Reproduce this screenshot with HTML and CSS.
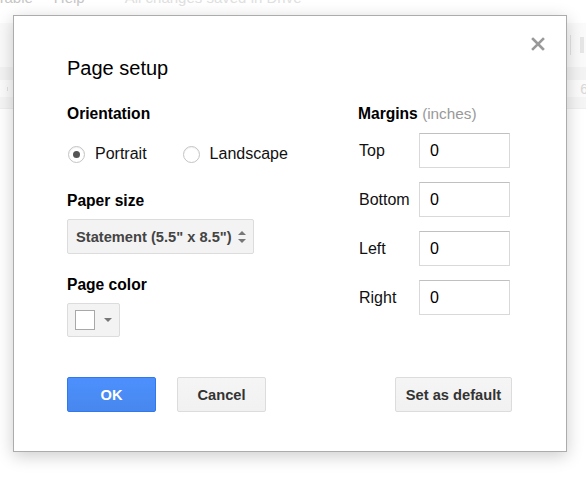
FILE: index.html
```html
<!DOCTYPE html>
<html>
<head>
<meta charset="utf-8">
<title>Page setup</title>
<link rel="stylesheet" href="styles.css">
</head>
<body>
<div class="page">
  <div class="menubar">
    <span class="menu menu-first">Table</span>
    <span class="menu">Help</span>
    <span class="status">All changes saved in Drive</span>
  </div>
  <div class="toolbar">
    <span class="tb-sep"></span>
    <span class="tb-icon"></span>
  </div>
  <div class="band"></div>
  <div class="ruler">
    <span class="tick"></span>
    <span class="ruler-num">6</span>
  </div>
  <div class="band band-low"></div>
</div>

<div class="dialog">
  <button class="close" aria-label="Close">
    <svg width="14" height="14" viewBox="0 0 14 14"><path d="M2 2 L12 12 M12 2 L2 12" stroke="#999" stroke-width="2.6" stroke-linecap="square" fill="none"/></svg>
  </button>
  <h1 class="title">Page setup</h1>
  <div class="body">
    <div class="col-left">
      <div class="label">Orientation</div>
      <div class="radios">
        <label class="radio"><span class="radio-circle checked"></span>Portrait</label>
        <label class="radio"><span class="radio-circle"></span>Landscape</label>
      </div>
      <div class="label label-gap">Paper size</div>
      <div class="select">
        <span>Statement (5.5" x 8.5")</span>
        <span class="updown"><span class="tri-up"></span><span class="tri-down"></span></span>
      </div>
      <div class="label label-gap2">Page color</div>
      <div class="color-btn">
        <span class="swatch"></span>
        <span class="caret"></span>
      </div>
    </div>
    <div class="col-right">
      <div class="label">Margins <span class="hint">(inches)</span></div>
      <div class="margin-rows">
        <div class="mrow"><span class="mlabel">Top</span><div class="minput">0</div></div>
        <div class="mrow"><span class="mlabel">Bottom</span><div class="minput">0</div></div>
        <div class="mrow"><span class="mlabel">Left</span><div class="minput">0</div></div>
        <div class="mrow"><span class="mlabel">Right</span><div class="minput">0</div></div>
      </div>
    </div>
  </div>
  <div class="footer">
    <div class="btn-group">
      <button class="btn btn-ok">OK</button>
      <button class="btn">Cancel</button>
    </div>
    <button class="btn btn-default">Set as default</button>
  </div>
</div>
</body>
</html>
```
FILE: styles.css
```css
html, body {
  margin: 0;
  padding: 0;
}
body {
  width: 586px;
  height: 484px;
  overflow: hidden;
  background: #fff;
  font-family: "Liberation Sans", Arial, sans-serif;
  position: relative;
}

/* faded document behind the dialog */
.page {
  display: flex;
  flex-direction: column;
}
.menubar {
  height: 23px;
  display: flex;
  align-items: flex-start;
  font-size: 15px;
  line-height: 16px;
  white-space: nowrap;
}
.menubar span {
  margin-top: -10px;
}
.menu {
  color: #c6c6c6;
  margin-right: 21px;
}
.menu-first {
  margin-left: -3px;
}
.status {
  color: #e0e0e0;
  margin-left: 19px;
}
.toolbar {
  height: 44px;
  background: #fafafa;
  display: flex;
  justify-content: flex-end;
  align-items: center;
}
.tb-sep {
  width: 1px;
  height: 20px;
  background: #e3e3e3;
  margin-right: 9px;
}
.tb-icon {
  width: 6px;
  height: 16px;
  border-left: 4px solid #e6e6e6;
  box-sizing: border-box;
}
.band {
  height: 13px;
  background: #f3f3f3;
}
.band-low {
  height: 11px;
  background: #f5f5f5;
  border-bottom: 1px solid #efefef;
}
.ruler {
  height: 17px;
  background: #fbfbfb;
  display: flex;
  align-items: center;
  justify-content: space-between;
}
.tick {
  width: 1px;
  height: 4px;
  background: #e3e3e3;
  margin-left: 7px;
}
.ruler-num {
  color: #d8d8d8;
  font-size: 14px;
  margin-right: -2px;
}

/* dialog */
.dialog {
  position: absolute;
  left: 13px;
  top: 15px;
  width: 554px;
  box-sizing: border-box;
  background: #fff;
  border: 1px solid #acacac;
  box-shadow: 0 4px 16px rgba(0, 0, 0, 0.2);
  padding: 40px 54px 39px 53px;
  color: #000;
}
.close {
  position: absolute;
  right: 21px;
  top: 21px;
  width: 14px;
  height: 14px;
  padding: 0;
  border: 0;
  background: none;
  display: block;
}
.close svg {
  display: block;
}
.title {
  margin: 0;
  font-size: 20px;
  line-height: 24px;
  font-weight: normal;
  color: #000;
}
.body {
  margin-top: 25px;
  display: grid;
  grid-template-columns: 291px 1fr;
}
.col-left, .col-right {
  display: flex;
  flex-direction: column;
  align-items: flex-start;
}
.label {
  font-size: 15.6px;
  line-height: 18px;
  font-weight: bold;
  color: #000;
}
.hint {
  font-weight: normal;
  color: #999;
  font-size: 15.3px;
}
.label-gap {
  margin-top: 28px;
}
.label-gap2 {
  margin-top: 22px;
}
.radios {
  margin-top: 21px;
  height: 20px;
  display: flex;
  align-items: center;
  gap: 35px;
}
.radio {
  display: flex;
  align-items: center;
  gap: 10px;
  font-size: 16px;
  color: #111;
  margin-left: 1px;
}
.radio-circle {
  width: 17px;
  height: 17px;
  box-sizing: border-box;
  border: 1px solid #c4c4c4;
  border-radius: 50%;
  background: #fff;
  box-shadow: inset 0 1px 1px rgba(0, 0, 0, 0.06);
  display: flex;
  align-items: center;
  justify-content: center;
}
.radio-circle.checked::after {
  content: "";
  width: 7px;
  height: 7px;
  border-radius: 50%;
  background: #555;
}
.select {
  margin-top: 9px;
  width: 187px;
  height: 35px;
  box-sizing: border-box;
  border: 1px solid #dcdcdc;
  border-radius: 2px;
  background: #f3f3f3;
  display: flex;
  align-items: center;
  justify-content: space-between;
  padding: 0 7px 0 8px;
  font-size: 14.67px;
  font-weight: bold;
  color: #444;
  white-space: nowrap;
}
.updown {
  display: flex;
  flex-direction: column;
  gap: 4px;
  margin-top: 1px;
}
.tri-up {
  width: 0;
  height: 0;
  border-left: 4px solid transparent;
  border-right: 4px solid transparent;
  border-bottom: 4px solid #777;
}
.tri-down {
  width: 0;
  height: 0;
  border-left: 4px solid transparent;
  border-right: 4px solid transparent;
  border-top: 4px solid #777;
}
.color-btn {
  margin-top: 9px;
  width: 53px;
  height: 34px;
  box-sizing: border-box;
  border: 1px solid #dcdcdc;
  border-radius: 2px;
  background: #f3f3f3;
  display: flex;
  align-items: center;
  padding: 0 7px;
  gap: 9px;
}
.swatch {
  width: 20px;
  height: 20px;
  box-sizing: border-box;
  border: 1px solid #a8a8a8;
  background: #fff;
}
.caret {
  width: 0;
  height: 0;
  border-left: 4px solid transparent;
  border-right: 4px solid transparent;
  border-top: 4px solid #777;
}
.margin-rows {
  margin-top: 10px;
  display: flex;
  flex-direction: column;
  gap: 14px;
}
.mrow {
  display: flex;
  align-items: center;
}
.mlabel {
  width: 61px;
  font-size: 16px;
  color: #111;
  padding-left: 1px;
  box-sizing: border-box;
}
.minput {
  width: 91px;
  height: 35px;
  box-sizing: border-box;
  border: 1px solid #d9d9d9;
  border-top-color: #c0c0c0;
  background: #fff;
  font-size: 16px;
  line-height: 33px;
  padding-left: 10px;
  color: #000;
}
.footer {
  margin-top: 40px;
  display: flex;
  justify-content: space-between;
  align-items: center;
}
.btn-group {
  display: flex;
  gap: 21px;
}
.btn {
  height: 35px;
  min-width: 89px;
  box-sizing: border-box;
  border: 1px solid #dcdcdc;
  border-radius: 2px;
  background: linear-gradient(#f5f5f5, #f1f1f1);
  font-family: "Liberation Sans", Arial, sans-serif;
  font-size: 14.67px;
  font-weight: bold;
  color: #333;
  padding: 0 10px;
  margin: 0;
  white-space: nowrap;
}
.btn-ok {
  background: linear-gradient(#4d90fe, #4787ed);
  border-color: #3079ed;
  color: #fff;
}
.btn-default {
  width: 117px;
  padding: 0;
}
```
